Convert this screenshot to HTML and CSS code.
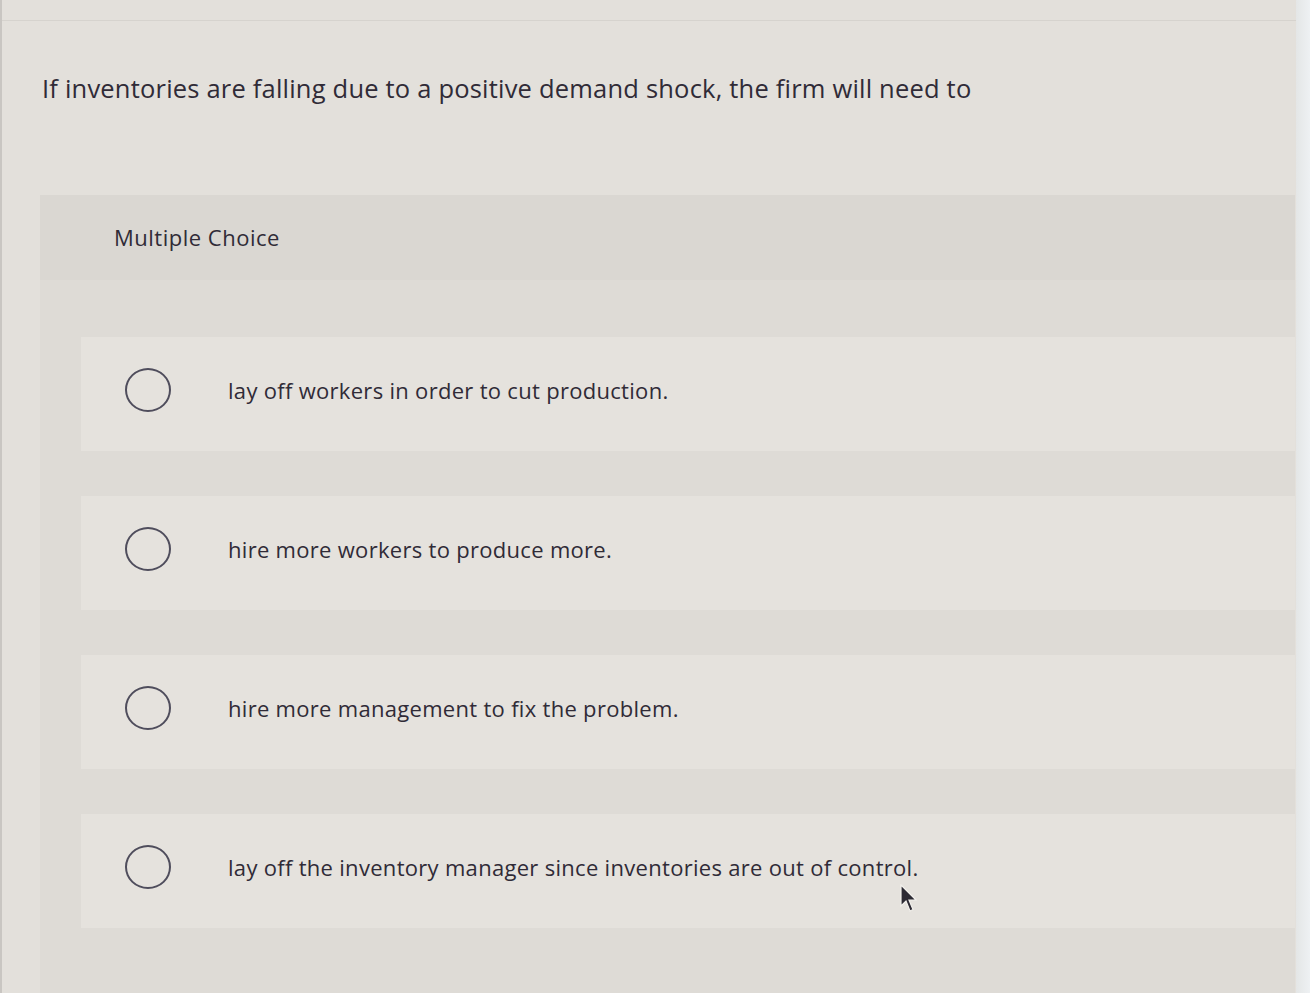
FILE: index.html
```html
<!DOCTYPE html>
<html lang="en">
<head>
<meta charset="utf-8">
<title>Multiple Choice</title>
<link rel="stylesheet" href="styles.css">
</head>
<body>
<div class="screen">
  <div class="top-rule"></div>
  <p class="question">If inventories are falling due to a positive demand shock, the firm will need to</p>
  <section class="panel">
    <div class="panel-head">Multiple Choice</div>
    <div class="panel-body">
      <label class="option"><span class="radio"></span><span class="opt-text">lay off workers in order to cut production.</span></label>
      <label class="option"><span class="radio"></span><span class="opt-text">hire more workers to produce more.</span></label>
      <label class="option"><span class="radio"></span><span class="opt-text">hire more management to fix the problem.</span></label>
      <label class="option"><span class="radio"></span><span class="opt-text">lay off the inventory manager since inventories are out of control.</span>
        <svg class="cursor" width="20" height="30" viewBox="0 0 20 30"><path d="M2 1 L2 22 L7 17 L11 27 L14 25.5 L10 16 L17 16 Z" fill="#2c2a33" stroke="#f2f0ec" stroke-width="1.2"/></svg>
      </label>
    </div>
  </section>
  <div class="edge"></div>
</div>
</body>
</html>
```
FILE: styles.css
```css
html, body {
  margin: 0;
  padding: 0;
}
body {
  background: #e3e0db;
  font-family: "Open Sans", Lato, "Liberation Sans", sans-serif;
  color: #302b37;
  width: 1310px;
  height: 993px;
  overflow: hidden;
}
.screen {
  position: relative;
  height: 993px;
  border-left: 2px solid #c9c6c2;
  box-sizing: border-box;
}
.top-rule {
  height: 20px;
  border-bottom: 1px solid #d6d3ce;
}
.question {
  margin: 52px 0 0 40px;
  font-size: 25.5px;
  line-height: 30px;
  font-weight: 500;
  letter-spacing: 0.2px;
}
.panel {
  margin: 92px 15px 0 38px;
  background: #dedbd6;
  height: 800px;
}
.panel-head {
  height: 85px;
  background: #dad7d2;
  padding-left: 74px;
  display: flex;
  align-items: center;
  font-size: 22px;
  font-weight: 500;
  letter-spacing: 0.5px;
  box-sizing: border-box;
  padding-bottom: 2px;
}
.panel-body {
  padding: 57px 0 0 41px;
  display: flex;
  flex-direction: column;
  gap: 45px;
}
.option {
  position: relative;
  height: 114px;
  background: #e5e2dd;
  display: flex;
  align-items: center;
  padding-left: 44px;
  padding-bottom: 8px;
  box-sizing: border-box;
}
.radio {
  width: 46px;
  height: 44px;
  border: 2px solid #4f4d5c;
  border-radius: 50%;
  flex: none;
  box-sizing: border-box;
}
.opt-text {
  margin-left: 57px;
  font-size: 22px;
  font-weight: 500;
  letter-spacing: 0.3px;
}
.cursor {
  position: absolute;
  left: 818px;
  top: 70px;
}
.edge {
  position: absolute;
  right: 0;
  top: 0;
  width: 14px;
  height: 993px;
  background: linear-gradient(90deg, #e4e6e6, #eef1f3);
}
```
